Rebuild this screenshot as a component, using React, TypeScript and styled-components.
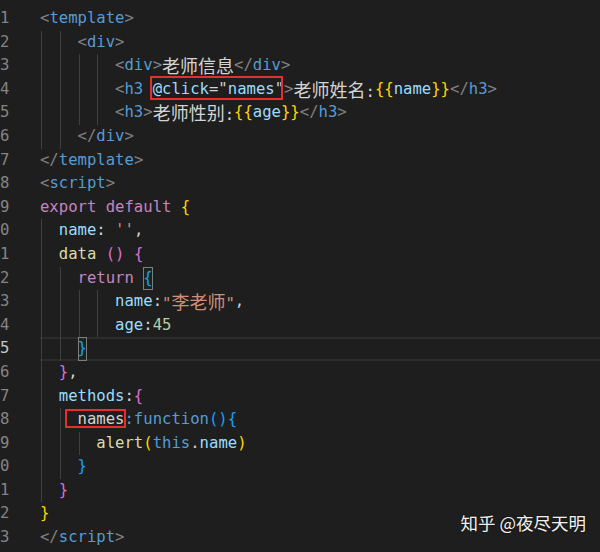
import React from 'react';
import styled, { createGlobalStyle } from 'styled-components';

const LINE = 23.6;

const colors = {
  punc: '#808080',
  tag: '#569cd6',
  attr: '#9cdcfe',
  text: '#d4d4d4',
  str: '#ce9178',
  kw: '#c586c0',
  fn: '#dcdcaa',
  num: '#b5cea8',
  store: '#569cd6',
  b1: '#ffd700',
  b2: '#da70d6',
  b3: '#179fff',
};

type Kind = keyof typeof colors;
type Tok = { k: Kind; s: string; match?: boolean };
type Box = { top: number; right: number; bottom: number; left: number };
type Part = Tok | { mark: Tok[]; box: Box };
type Line = { indent: number; parts: Part[]; active?: boolean };

const t = (k: Kind, s: string, match?: boolean): Tok => ({ k, s, match });

const lines: Line[] = [
  { indent: 0, parts: [t('punc', '<'), t('tag', 'template'), t('punc', '>')] },
  { indent: 4, parts: [t('punc', '<'), t('tag', 'div'), t('punc', '>')] },
  {
    indent: 8,
    parts: [t('punc', '<'), t('tag', 'div'), t('punc', '>'), t('text', '老师信息'), t('punc', '</'), t('tag', 'div'), t('punc', '>')],
  },
  {
    indent: 8,
    parts: [
      t('punc', '<'),
      t('tag', 'h3'),
      t('text', ' '),
      {
        mark: [t('attr', '@click'), t('text', '="'), t('attr', 'names'), t('text', '"')],
        box: { top: -2, right: 1, bottom: 1, left: -3 },
      },
      t('punc', '>'),
      t('text', '老师姓名:'),
      t('b1', '{{'),
      t('attr', 'name'),
      t('b1', '}}'),
      t('punc', '</'),
      t('tag', 'h3'),
      t('punc', '>'),
    ],
  },
  {
    indent: 8,
    parts: [
      t('punc', '<'),
      t('tag', 'h3'),
      t('punc', '>'),
      t('text', '老师性别:'),
      t('b1', '{{'),
      t('attr', 'age'),
      t('b1', '}}'),
      t('punc', '</'),
      t('tag', 'h3'),
      t('punc', '>'),
    ],
  },
  { indent: 4, parts: [t('punc', '</'), t('tag', 'div'), t('punc', '>')] },
  { indent: 0, parts: [t('punc', '</'), t('tag', 'template'), t('punc', '>')] },
  { indent: 0, parts: [t('punc', '<'), t('tag', 'script'), t('punc', '>')] },
  { indent: 0, parts: [t('kw', 'export default '), t('b1', '{')] },
  { indent: 2, parts: [t('attr', 'name'), t('text', ': '), t('str', "''"), t('text', ',')] },
  { indent: 2, parts: [t('fn', 'data'), t('text', ' '), t('b2', '()'), t('text', ' '), t('b2', '{')] },
  { indent: 4, parts: [t('kw', 'return'), t('text', ' '), t('b3', '{', true)] },
  { indent: 8, parts: [t('attr', 'name'), t('text', ':'), t('str', '"李老师"'), t('text', ',')] },
  { indent: 8, parts: [t('attr', 'age'), t('text', ':'), t('num', '45')] },
  { indent: 4, parts: [t('b3', '}', true)], active: true },
  { indent: 2, parts: [t('b2', '}'), t('text', ',')] },
  { indent: 2, parts: [t('attr', 'methods'), t('text', ':'), t('b2', '{')] },
  {
    indent: 4,
    parts: [
      { mark: [t('text', 'names')], box: { top: 1, right: -2, bottom: 4, left: -13 } },
      t('store', ':function'),
      t('b3', '()'),
      t('b3', '{'),
    ],
  },
  {
    indent: 6,
    parts: [t('fn', 'alert'), t('b1', '('), t('store', 'this'), t('text', '.'), t('attr', 'name'), t('b1', ')')],
  },
  { indent: 4, parts: [t('b3', '}')] },
  { indent: 2, parts: [t('b2', '}')] },
  { indent: 0, parts: [t('b1', '}')] },
  { indent: 0, parts: [t('punc', '</'), t('tag', 'script'), t('punc', '>')] },
];

const GlobalStyle = createGlobalStyle`
  html, body {
    margin: 0;
    padding: 0;
    background: #1e1e1e;
  }
`;

const Editor = styled.div`
  position: relative;
  width: 600px;
  height: 552px;
  overflow: hidden;
  box-sizing: border-box;
  padding-top: 7px;
  background: #1e1e1e;
  font-family: 'DejaVu Sans Mono', 'Liberation Mono', monospace;
  font-size: 15.6px;
`;

const Row = styled.div`
  display: flex;
  height: ${LINE}px;
`;

const Num = styled.div<{ $active?: boolean }>`
  flex: none;
  width: 9.4px;
  display: flex;
  justify-content: flex-end;
  line-height: ${LINE}px;
  color: ${(p) => (p.$active ? '#c6c6c6' : '#858585')};
`;

const Code = styled.div<{ $active?: boolean }>`
  flex: 1;
  display: flex;
  margin-left: 30.6px;
  white-space: pre;
  line-height: ${LINE}px;
  box-shadow: ${(p) => (p.$active ? 'inset 0 2px 0 #2c2c2c, inset 0 -2px 0 #2c2c2c' : 'none')};
`;

const Indent = styled.span<{ $n: number }>`
  flex: none;
  width: ${(p) => p.$n}ch;
  background: repeating-linear-gradient(
    90deg,
    transparent 0 1px,
    #3f3f3f 1px 2px,
    transparent 2px 2ch
  );
`;

const Token = styled.span<{ $c: string; $match?: boolean }>`
  color: ${(p) => p.$c};
  ${(p) =>
    p.$match &&
    `
    box-shadow: inset 0 0 0 1px #7d7d7d;
    background: rgba(0, 100, 0, 0.1);
  `}
`;

const Han = styled.span`
  font-family: 'Noto Sans CJK SC', sans-serif;
  font-size: 18px;
`;

const Mark = styled.span<{ $box: Box }>`
  position: relative;
  display: flex;

  &::after {
    content: '';
    position: absolute;
    top: ${(p) => p.$box.top}px;
    right: ${(p) => p.$box.right}px;
    bottom: ${(p) => p.$box.bottom}px;
    left: ${(p) => p.$box.left}px;
    border: 2px solid #e3302d;
  }
`;

const Watermark = styled.div`
  position: absolute;
  right: 14px;
  top: 512px;
  font-family: 'Noto Sans CJK SC', sans-serif;
  font-size: 17.5px;
  line-height: 1.2;
  color: #f2f2f2;
  text-shadow: 0 0 2px rgba(0, 0, 0, 0.7);
  white-space: pre;
`;

const hanRe = /([\u4e00-\u9fff]+)/;

const renderText = (s: string) =>
  s.split(hanRe).map((piece, i) => (hanRe.test(piece) ? <Han key={i}>{piece}</Han> : piece));

const renderTok = (tok: Tok, key: number) => (
  <Token key={key} $c={colors[tok.k]} $match={tok.match}>
    {renderText(tok.s)}
  </Token>
);

const App = () => (
  <>
    <GlobalStyle />
    <Editor>
      {lines.map((line, i) => (
        <Row key={i}>
          <Num $active={line.active}>{i + 1}</Num>
          <Code $active={line.active}>
            {line.indent > 0 && <Indent $n={line.indent} />}
            {line.parts.map((part, j) =>
              'mark' in part ? (
                <Mark key={j} $box={part.box}>
                  {part.mark.map(renderTok)}
                </Mark>
              ) : (
                renderTok(part, j)
              )
            )}
          </Code>
        </Row>
      ))}
      <Watermark>知乎 @夜尽天明</Watermark>
    </Editor>
  </>
);

export default App;
